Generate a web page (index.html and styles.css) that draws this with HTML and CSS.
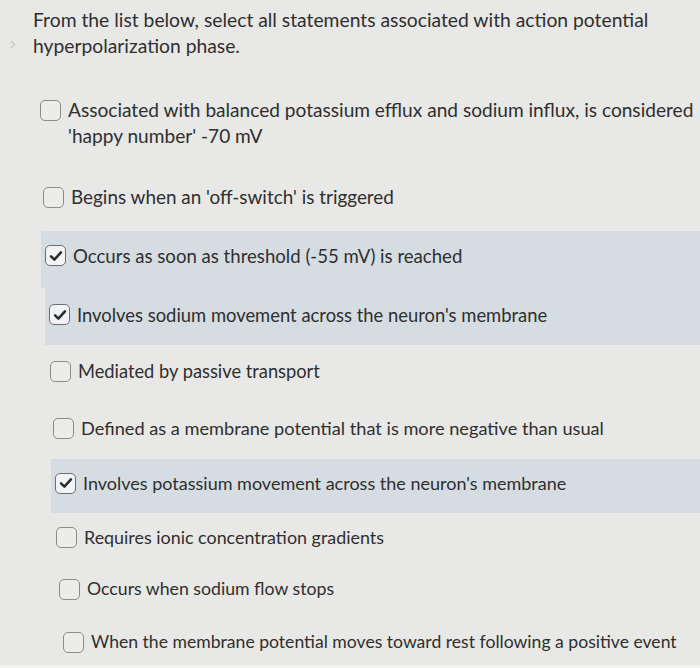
FILE: index.html
```html
<!DOCTYPE html>
<html lang="en">
<head>
<meta charset="utf-8">
<title>Quiz question</title>
<link rel="stylesheet" href="styles.css">
</head>
<body>
<div class="page">
  <div class="question">
    <span class="chev"><svg width="6" height="9" viewBox="0 0 6 9"><path d="M1 1 L4.5 4.5 L1 8" fill="none" stroke="#c9c9c7" stroke-width="1.3"/></svg></span>
    <p class="qtext">From the list below, select all statements associated with action potential hyperpolarization phase.</p>
  </div>
  <ul class="answers">
    <li class="opt r1"><span class="cb"></span><span class="label">Associated with balanced potassium efflux and sodium influx, is considered 'happy number' -70 mV</span></li>
    <li class="opt r2"><span class="cb"></span><span class="label">Begins when an 'off-switch' is triggered</span></li>
    <li class="opt r3 sel"><span class="cb on"><svg viewBox="0 0 20 20" width="18" height="18"><path d="M4.5 10.5 L8.2 14 L15.5 6" fill="none" stroke="#2a2a2a" stroke-width="2.8" stroke-linecap="round" stroke-linejoin="round"/></svg></span><span class="label">Occurs as soon as threshold (-55 mV) is reached</span></li>
    <li class="opt r4 sel"><span class="cb on"><svg viewBox="0 0 20 20" width="18" height="18"><path d="M4.5 10.5 L8.2 14 L15.5 6" fill="none" stroke="#2a2a2a" stroke-width="2.8" stroke-linecap="round" stroke-linejoin="round"/></svg></span><span class="label">Involves sodium movement across the neuron's membrane</span></li>
    <li class="opt r5"><span class="cb"></span><span class="label">Mediated by passive transport</span></li>
    <li class="opt r6"><span class="cb"></span><span class="label">Defined as a membrane potential that is more negative than usual</span></li>
    <li class="opt r7 sel"><span class="cb on"><svg viewBox="0 0 20 20" width="18" height="18"><path d="M4.5 10.5 L8.2 14 L15.5 6" fill="none" stroke="#2a2a2a" stroke-width="2.8" stroke-linecap="round" stroke-linejoin="round"/></svg></span><span class="label">Involves potassium movement across the neuron's membrane</span></li>
    <li class="opt r8"><span class="cb"></span><span class="label">Requires ionic concentration gradients</span></li>
    <li class="opt r9"><span class="cb"></span><span class="label">Occurs when sodium flow stops</span></li>
    <li class="opt r10"><span class="cb"></span><span class="label">When the membrane potential moves toward rest following a positive event</span></li>
  </ul>
</div>
</body>
</html>
```

FILE: styles.css
```css
html, body {
  margin: 0;
  padding: 0;
}
body {
  background: #e8e8e6;
  font-family: Lato, "Open Sans", sans-serif;
  color: #2f2f2f;
  font-size: 18px;
  width: 700px;
  height: 668px;
  overflow: hidden;
}
.page {
  height: 665px;
  border-bottom: 3px solid #f4f4f2;
}
.question {
  display: flex;
  align-items: flex-start;
  height: 86px;
  padding-left: 10px;
  box-sizing: border-box;
}
.chev {
  width: 23px;
  flex: none;
  margin-top: 40px;
  display: flex;
}
.qtext {
  margin: 7px 0 0 0;
  line-height: 26px;
  width: 650px;
  font-size: 19.3px;
}
.answers {
  list-style: none;
  margin: 0;
  padding: 0;
}
.opt {
  display: flex;
  align-items: center;
  gap: 7px;
  padding-left: 4px;
  padding-bottom: 4px;
  box-sizing: border-box;
  line-height: 26px;
  white-space: nowrap;
}
.opt.sel {
  background: #d5dce2;
}
.cb {
  width: 21px;
  height: 21px;
  flex: none;
  box-sizing: border-box;
  border: 1.6px solid #8b8b89;
  border-radius: 5px;
  background: #ecece9;
  display: flex;
  align-items: center;
  justify-content: center;
}
.cb.on {
  border-color: #6c6f72;
  background: #f2f3f4;
}
.r1 { margin-left: 36px; height: 86px; align-items: flex-start; padding-top: 11px; white-space: normal; font-size: 19.1px; }
.r1 .cb { margin-top: 3px; }
.r2 { margin-left: 39px; height: 59px; padding-bottom: 9px; font-size: 18.9px; }
.r3 { margin-left: 41px; height: 57px; padding-bottom: 8px; font-size: 18.6px; }
.r4 { margin-left: 45px; height: 57px; padding-bottom: 4px; font-size: 18.4px; }
.r5 { margin-left: 46px; height: 55px; padding-bottom: 3px; font-size: 18.3px; }
.r6 { margin-left: 49px; height: 59px; padding-bottom: 3px; font-size: 18.2px; }
.r7 { margin-left: 51px; height: 54px; padding-bottom: 6px; font-size: 18px; }
.r8 { margin-left: 52px; height: 50px; padding-bottom: 2px; font-size: 17.9px; }
.r9 { margin-left: 55px; height: 53px; padding-bottom: 1px; font-size: 17.7px; }
.r10 { margin-left: 59px; height: 49px; padding-bottom: 0; padding-top: 3px; font-size: 17.6px; }
```
